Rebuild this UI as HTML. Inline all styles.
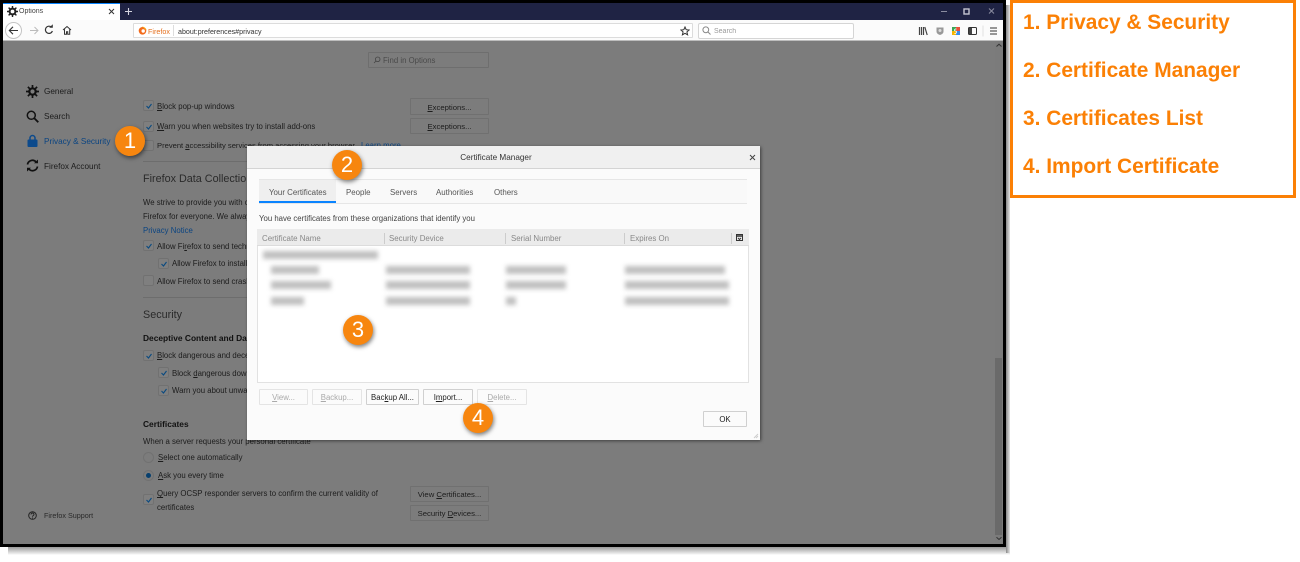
<!DOCTYPE html>
<html><head><meta charset="utf-8">
<style>
html,body{margin:0;padding:0;background:#fff}
body{width:1300px;height:562px;position:relative;overflow:hidden;font-family:"Liberation Sans",sans-serif}
.a{position:absolute}
.t{position:absolute;white-space:nowrap;font-size:7.8px;line-height:12px;color:#1c1c1c;filter:blur(.3px);margin-top:1px}
.s{font-size:8.200px}
.b{font-size:8.400px;font-weight:bold;color:#111}
.cb{position:absolute;width:9px;height:9px;border:1px solid #717171;border-radius:2px;background:#7f7f7f}
.cb svg{position:absolute;left:1px;top:1px}
.btn{position:absolute;box-sizing:border-box;border:1px solid #707070;background:#7c7c7c;font-size:7.700px;color:#1c1c1c;text-align:center;border-radius:1px;filter:blur(.3px)}
.mb{position:absolute;box-sizing:border-box;height:16px;border:1px solid #e4e4e4;background:#fbfbfb;font-size:7.800px;line-height:16px;text-align:center;color:#aaa;border-radius:1px;filter:blur(.3px)}
.num{position:absolute;width:30px;height:30px;border-radius:50%;background:#f7860f;color:#fff;font-size:22px;line-height:30px;text-align:center;box-shadow:1px 2px 4px rgba(0,0,0,.5)}
.bl{position:absolute;height:8px;background:#b4b4b4;filter:blur(2.500px);opacity:.85}
.hd{position:absolute;top:233px;font-size:7.900px;color:#888;white-space:nowrap;line-height:12px;filter:blur(.25px)}
.sep{position:absolute;top:233px;width:1px;height:11px;background:#ccc}
.tab{position:absolute;top:187px;font-size:7.900px;color:#555;line-height:12px;white-space:nowrap;filter:blur(.25px)}
.lb{position:absolute;left:1023px;font-size:20.900px;font-weight:bold;color:#fb8005;white-space:nowrap;line-height:24px}
</style></head><body>
<!-- shadow -->
<div class="a" style="left:8px;top:547px;width:1002px;height:8px;background:linear-gradient(#999,#eee 85%,#fff)"></div>
<div class="a" style="left:1006px;top:5px;width:4px;height:548px;background:linear-gradient(90deg,#888,#e6e6e6)"></div>
<!-- frame -->
<div class="a" style="left:0;top:0;width:1006px;height:547px;background:#000"></div>
<div class="a" style="left:3px;top:3px;width:1000px;height:17px;background:#1f2344"></div>
<div class="a" style="left:3px;top:3px;width:117px;height:17px;background:#fff;border-top:1px solid #0a84ff;box-sizing:border-box"></div>
<svg class="a" style="left:7px;top:6px" width="11" height="11" viewBox="0 0 11 11"><circle cx="5.500" cy="5.500" r="2.900" fill="none" stroke="#222" stroke-width="2"/><path d="M5.500 0v2M5.500 9v2M0 5.500h2M9 5.500h2M1.600 1.600l1.400 1.400M8 8l1.400 1.400M9.400 1.600L8 3M3 8L1.600 9.400" stroke="#222" stroke-width="1.400"/></svg>
<div class="t" style="left:19px;top:5px;font-size:7px;color:#444">Options</div>
<svg class="a" style="left:108px;top:8px" width="7" height="7" viewBox="0 0 7 7"><path d="M1 1l5 5M6 1L1 6" stroke="#333" stroke-width="1"/></svg>
<svg class="a" style="left:124px;top:7px" width="9" height="9" viewBox="0 0 9 9"><path d="M4.500 1v7M1 4.500h7" stroke="#d5d5e0" stroke-width="1.100"/></svg>
<svg class="a" style="left:939px;top:6px" width="60" height="12" viewBox="0 0 60 12"><path d="M2 5.500h6" stroke="#8a8ca0" stroke-width="1"/><rect x="25" y="3" width="5" height="5" fill="none" stroke="#c5c6d2" stroke-width="1.400"/><path d="M50 2.500l5 5M55 2.500l-5 5" stroke="#8a8ca0" stroke-width="1"/></svg>
<!-- toolbar -->
<div class="a" style="left:3px;top:20px;width:1000px;height:21px;background:#fbfbfb;border-bottom:1px solid #bdbdbd;box-sizing:border-box"></div>
<svg class="a" style="left:4px;top:21px" width="68" height="19" viewBox="0 0 68 19"><circle cx="9.500" cy="9.500" r="8" fill="#fff" stroke="#c4c4c4"/><path d="M14 9.500H5.500M9 5.800L5.300 9.500 9 13.200" fill="none" stroke="#333" stroke-width="1.100"/><path d="M34 9.500h-8M30.500 6l3.500 3.500-3.500 3.500" fill="none" stroke="#bbb" stroke-width="1"/><path d="M47.500 6.200A3.600 3.600 0 1 0 48.400 10" fill="none" stroke="#333" stroke-width="1.200"/><path d="M45.200 6.800h3.600V3.200z" fill="#333"/><path d="M59 9l4-3.500L67 9M60.500 8.300v5h2v-2.500h1.200v2.500h2V8.300" fill="none" stroke="#333" stroke-width="1"/></svg>
<div class="a" style="left:133px;top:23px;width:560px;height:15px;background:#fff;border:1px solid #dcdcdc;box-sizing:border-box;border-radius:1px"></div>
<svg class="a" style="left:138px;top:26px" width="9" height="9" viewBox="0 0 9 9"><circle cx="4.500" cy="4.800" r="3.800" fill="#f36a1a"/><circle cx="5.200" cy="5" r="1.700" fill="#fff"/><path d="M4 .5C6.500.8 8.500 2.500 8.600 4.500L7 3z" fill="#f9b11c"/></svg>
<div class="t" style="left:148px;top:25px;font-size:7.200px;color:#e4701e">Firefox</div>
<div class="a" style="left:173px;top:25px;width:1px;height:11px;background:#ddd"></div>
<div class="t" style="left:178px;top:25px;font-size:7.100px;color:#333">about:preferences#privacy</div>
<svg class="a" style="left:680px;top:26px" width="10" height="10" viewBox="0 0 10 10"><path d="M5 1l1.200 2.700 2.900.3-2.200 1.900.7 2.900L5 7.300 2.400 8.800l.7-2.900L.9 4l2.900-.3z" fill="none" stroke="#333" stroke-width="1"/></svg>
<div class="a" style="left:698px;top:23px;width:156px;height:16px;background:#fff;border:1px solid #d5d5d5;box-sizing:border-box;border-radius:2px"></div>
<svg class="a" style="left:702px;top:26px" width="9" height="9" viewBox="0 0 9 9"><circle cx="3.800" cy="3.800" r="2.900" fill="none" stroke="#888"/><path d="M6 6l2.500 2.500" stroke="#888"/></svg>
<div class="t" style="left:714px;top:25px;font-size:7px;color:#999">Search</div>
<svg class="a" style="left:918px;top:25px" width="80" height="12" viewBox="0 0 80 12"><path d="M1.500 2v8M3.500 2v8M5.500 2v8M6.800 2l2.400 8" stroke="#444" stroke-width="1.200" fill="none"/><path d="M18.500 2.500h7v4c0 2-2 3-3.500 3.500-1.500-.5-3.500-1.500-3.500-3.500z" fill="#999"/><circle cx="22" cy="5.500" r="1.500" fill="#ddd"/><rect x="34" y="2" width="4" height="4" fill="#3aa655"/><rect x="38" y="2" width="4" height="4" fill="#e8503a"/><rect x="34" y="6" width="4" height="4" fill="#f7b500"/><rect x="38" y="6" width="4" height="4" fill="#3a8de8"/><path d="M36.500 8.500c2 .5 3-2.500 1-2.500s-1-2.500 1-2" stroke="#fff" fill="none" stroke-width=".8"/><rect x="50.500" y="2.500" width="8" height="7" rx="1" fill="none" stroke="#333"/><rect x="51" y="3" width="3" height="6" fill="#444"/><path d="M65 .5v11" stroke="#e2e2e2"/><path d="M72 3h7M72 6h7M72 9h7" stroke="#333" stroke-width="1"/></svg>
<!-- content -->
<div class="a" style="left:3px;top:41px;width:1000px;height:503px;background:#7c7c7c"></div>
<div class="a" style="left:995px;top:41px;width:8px;height:503px;background:#7b7b7b"></div>
<div class="a" style="left:995px;top:358px;width:7px;height:177px;background:#6a6a6a"></div>
<svg class="a" style="left:995px;top:43px" width="8" height="5" viewBox="0 0 8 5"><path d="M1.500 3.500L4 1.200l2.500 2.300" fill="none" stroke="#333"/></svg>
<svg class="a" style="left:995px;top:536px" width="8" height="5" viewBox="0 0 8 5"><path d="M1.500 1.200L4 3.500l2.500-2.300" fill="none" stroke="#333"/></svg>
<div class="a" style="left:368px;top:52px;width:121px;height:16px;border:1px solid #6e6e6e;box-sizing:border-box;border-radius:1px"></div>
<svg class="a" style="left:373px;top:56px" width="8" height="8" viewBox="0 0 8 8"><circle cx="4.700" cy="3.300" r="2.300" fill="none" stroke="#444" stroke-width=".8"/><path d="M3 5L1 7" stroke="#444" stroke-width=".8"/></svg>
<div class="t" style="left:383px;top:54px;color:#4a4a4a">Find in Options</div>
<!-- sidebar -->
<svg class="a" style="left:26px;top:85px" width="13" height="13" viewBox="0 0 13 13"><circle cx="6.500" cy="6.500" r="3.200" fill="none" stroke="#111" stroke-width="2.200"/><path d="M6.500 0v2.500M6.500 10.500V13M0 6.500h2.500M10.500 6.500H13M1.900 1.900l1.800 1.800M9.300 9.300l1.800 1.800M11.100 1.900L9.300 3.700M3.700 9.300l-1.800 1.800" stroke="#111" stroke-width="1.700"/></svg>
<div class="t s" style="left:44px;top:85px">General</div>
<svg class="a" style="left:26px;top:110px" width="13" height="13" viewBox="0 0 13 13"><circle cx="5.300" cy="5.300" r="4" fill="none" stroke="#111" stroke-width="1.500"/><path d="M8.300 8.300l4 4" stroke="#111" stroke-width="1.800"/></svg>
<div class="t s" style="left:44px;top:110px">Search</div>
<svg class="a" style="left:27px;top:134px" width="11" height="13" viewBox="0 0 11 13"><path d="M3 6V4a2.500 2.500 0 0 1 5 0v2" fill="none" stroke="#0c4a8c" stroke-width="1.500"/><rect x=".5" y="5.500" width="10" height="7.500" rx="1" fill="#0c4a8c"/></svg>
<div class="t s" style="left:44px;top:135px;color:#0a4482">Privacy &amp; Security</div>
<svg class="a" style="left:26px;top:159px" width="13" height="13" viewBox="0 0 13 13"><path d="M1.500 5.500A5 5 0 0 1 10 2.800M11.500 7.500A5 5 0 0 1 3 10.200" fill="none" stroke="#111" stroke-width="1.700"/><path d="M8 4.200h4V.5zM5 8.800H1v3.700z" fill="#111"/></svg>
<div class="t s" style="left:44px;top:160px">Firefox Account</div>
<svg class="a" style="left:28px;top:511px" width="9" height="9" viewBox="0 0 9 9"><circle cx="4.500" cy="4.500" r="3.800" fill="none" stroke="#222"/><path d="M3 3.500c0-2 3-2 3 0 0 1-1.500 1-1.500 2.200M4.500 6.500v1" stroke="#222" fill="none" stroke-width=".9"/></svg>
<div class="t" style="left:44px;top:509px;font-size:7.200px;color:#2a2a2a">Firefox Support</div>
<!-- main -->
<div class="cb" style="left:143px;top:100px"><svg width="8" height="8" viewBox="0 0 8 8"><path d="M1.500 4l2 2 3-4" fill="none" stroke="#0a4a80" stroke-width="1.100"/></svg></div>
<div class="t" style="left:157px;top:100px"><u>B</u>lock pop-up windows</div>
<div class="btn" style="left:410px;top:98px;width:79px;height:17px;line-height:17px"><u>E</u>xceptions...</div>
<div class="cb" style="left:143px;top:121px"><svg width="8" height="8" viewBox="0 0 8 8"><path d="M1.500 4l2 2 3-4" fill="none" stroke="#0a4a80" stroke-width="1.100"/></svg></div>
<div class="t" style="left:157px;top:120px"><u>W</u>arn you when websites try to install add-ons</div>
<div class="btn" style="left:410px;top:118px;width:79px;height:16px;line-height:16px"><u>E</u>xceptions...</div>
<div class="cb" style="left:143px;top:140px"></div>
<div class="t" style="left:157px;top:139px;font-size:7.600px">Prevent <u>a</u>ccessibility services from accessing your browser</div>
<div class="t" style="left:361px;top:139px;color:#0a4482">Learn more</div>
<div class="a" style="left:143px;top:161px;width:352px;height:1px;background:#6d6d6d"></div>
<div class="t" style="left:143px;top:171px;font-size:10.800px;line-height:15px;color:#2a2a2a">Firefox Data Collection</div>
<div class="t" style="left:143px;top:196px">We strive to provide you with choices</div>
<div class="t" style="left:143px;top:210px">Firefox for everyone. We always ask</div>
<div class="t" style="left:143px;top:224px;color:#0a4482">Privacy Notice</div>
<div class="cb" style="left:143px;top:240px"><svg width="8" height="8" viewBox="0 0 8 8"><path d="M1.500 4l2 2 3-4" fill="none" stroke="#0a4a80" stroke-width="1.100"/></svg></div>
<div class="t" style="left:157px;top:240px">Allow Fi<u>r</u>efox to send technical data</div>
<div class="cb" style="left:158px;top:258px"><svg width="8" height="8" viewBox="0 0 8 8"><path d="M1.500 4l2 2 3-4" fill="none" stroke="#0a4a80" stroke-width="1.100"/></svg></div>
<div class="t" style="left:172px;top:257px">Allow Firefox to install studies</div>
<div class="cb" style="left:143px;top:275px"></div>
<div class="t" style="left:157px;top:275px">Allow Firefox to send crash reports</div>
<div class="a" style="left:143px;top:297px;width:352px;height:1px;background:#6d6d6d"></div>
<div class="t" style="left:143px;top:307px;font-size:10.800px;line-height:15px;color:#2a2a2a">Security</div>
<div class="t b" style="left:143px;top:331px">Deceptive Content and Dangerous</div>
<div class="cb" style="left:143px;top:350px"><svg width="8" height="8" viewBox="0 0 8 8"><path d="M1.500 4l2 2 3-4" fill="none" stroke="#0a4a80" stroke-width="1.100"/></svg></div>
<div class="t" style="left:157px;top:349px"><u>B</u>lock dangerous and deceptive</div>
<div class="cb" style="left:158px;top:367px"><svg width="8" height="8" viewBox="0 0 8 8"><path d="M1.500 4l2 2 3-4" fill="none" stroke="#0a4a80" stroke-width="1.100"/></svg></div>
<div class="t" style="left:172px;top:367px">Block <u>d</u>angerous downloads</div>
<div class="cb" style="left:158px;top:385px"><svg width="8" height="8" viewBox="0 0 8 8"><path d="M1.500 4l2 2 3-4" fill="none" stroke="#0a4a80" stroke-width="1.100"/></svg></div>
<div class="t" style="left:172px;top:384px">Warn you about unwanted</div>
<div class="t b" style="left:143px;top:417px">Certificates</div>
<div class="t" style="left:143px;top:435px">When a server requests your personal certificate</div>
<div class="a" style="left:143px;top:452px;width:9px;height:9px;border:1px solid #717171;border-radius:50%"></div>
<div class="t" style="left:158px;top:451px"><u>S</u>elect one automatically</div>
<div class="a" style="left:143px;top:470px;width:9px;height:9px;border:1px solid #717171;border-radius:50%"></div>
<div class="a" style="left:146px;top:473px;width:5px;height:5px;background:#063f6e;border-radius:50%"></div>
<div class="t" style="left:158px;top:469px"><u>A</u>sk you every time</div>
<div class="cb" style="left:143px;top:494px"><svg width="8" height="8" viewBox="0 0 8 8"><path d="M1.500 4l2 2 3-4" fill="none" stroke="#0a4a80" stroke-width="1.100"/></svg></div>
<div class="t" style="left:157px;top:487px"><u>Q</u>uery OCSP responder servers to confirm the current validity of</div>
<div class="t" style="left:157px;top:501px">certificates</div>
<div class="btn" style="left:410px;top:486px;width:79px;height:16px;line-height:16px">View <u>C</u>ertificates...</div>
<div class="btn" style="left:410px;top:505px;width:79px;height:16px;line-height:16px">Security <u>D</u>evices...</div>
<!-- dialog -->
<div class="a" style="left:247px;top:146px;width:513px;height:294px;background:#fbfbfb;box-shadow:1px 1px 3px rgba(0,0,0,.5)"></div>
<div class="a" style="left:247px;top:146px;width:513px;height:23px;background:#f0f0f0;border-bottom:1px solid #d4d4d4;box-sizing:border-box"></div>
<div class="t" style="left:247px;top:151px;width:498px;text-align:center;font-size:8.200px;color:#333">Certificate Manager</div>
<svg class="a" style="left:749px;top:154px" width="7" height="7" viewBox="0 0 7 7"><path d="M1 1l5 5M6 1L1 6" stroke="#444" stroke-width="1"/></svg>
<div class="a" style="left:259px;top:179px;width:488px;height:25px;background:#f9f9f9;border-top:1px solid #e6e6e6;border-bottom:1px solid #e6e6e6;box-sizing:border-box"></div>
<div class="a" style="left:259px;top:180px;width:77px;height:23px;background:#efefef;border-bottom:2px solid #0a84ff;box-sizing:border-box"></div>
<div class="tab" style="left:269px">Your Certificates</div>
<div class="tab" style="left:346px">People</div>
<div class="tab" style="left:390px">Servers</div>
<div class="tab" style="left:436px">Authorities</div>
<div class="tab" style="left:494px">Others</div>
<div class="t" style="left:259px;top:212px;color:#444">You have certificates from these organizations that identify you</div>
<div class="a" style="left:257px;top:229px;width:492px;height:154px;background:#fff;border:1px solid #e2e2e2;box-sizing:border-box"></div>
<div class="a" style="left:257px;top:229px;width:492px;height:17px;background:#ebebeb;border-bottom:1px solid #dcdcdc;box-sizing:border-box"></div>
<div class="hd" style="left:262px">Certificate Name</div>
<div class="sep" style="left:384px"></div><div class="hd" style="left:389px">Security Device</div>
<div class="sep" style="left:505px"></div><div class="hd" style="left:511px">Serial Number</div>
<div class="sep" style="left:624px"></div><div class="hd" style="left:630px">Expires On</div>
<div class="sep" style="left:731px"></div>
<svg class="a" style="left:736px;top:234px" width="7" height="7" viewBox="0 0 7 7"><rect x=".5" y=".5" width="6" height="6" fill="none" stroke="#333"/><path d="M.5 2h6" stroke="#333" stroke-width="1.500"/><path d="M2 4l1.500 1.500L5 4" fill="none" stroke="#333"/></svg>
<div class="bl" style="left:263px;top:251px;width:115px"></div>
<div class="bl" style="left:271px;top:266px;width:48px"></div><div class="bl" style="left:386px;top:266px;width:84px"></div><div class="bl" style="left:506px;top:266px;width:60px"></div><div class="bl" style="left:625px;top:266px;width:100px"></div>
<div class="bl" style="left:271px;top:281px;width:60px"></div><div class="bl" style="left:386px;top:281px;width:84px"></div><div class="bl" style="left:506px;top:281px;width:60px"></div><div class="bl" style="left:625px;top:281px;width:104px"></div>
<div class="bl" style="left:271px;top:297px;width:33px"></div><div class="bl" style="left:386px;top:297px;width:84px"></div><div class="bl" style="left:506px;top:297px;width:10px"></div><div class="bl" style="left:625px;top:297px;width:104px"></div>
<div class="mb" style="left:259px;top:389px;width:49px"><u>V</u>iew...</div>
<div class="mb" style="left:312px;top:389px;width:50px"><u>B</u>ackup...</div>
<div class="mb" style="left:366px;top:389px;width:53px;color:#222;border-color:#d0d0d0">Bac<u>k</u>up All...</div>
<div class="mb" style="left:423px;top:389px;width:50px;color:#222;border-color:#d0d0d0">I<u>m</u>port...</div>
<div class="mb" style="left:477px;top:389px;width:50px"><u>D</u>elete...</div>
<div class="mb" style="left:703px;top:411px;width:44px;color:#222;border-color:#d0d0d0">OK</div>
<svg class="a" style="left:752px;top:432px" width="7" height="7" viewBox="0 0 7 7"><path d="M6 2L2 6M6 4L4 6" stroke="#ccc"/></svg>
<!-- callouts -->
<div class="num" style="left:115px;top:126px">1</div>
<div class="num" style="left:332px;top:150px">2</div>
<div class="num" style="left:343px;top:315px">3</div>
<div class="num" style="left:463px;top:403px">4</div>
<!-- legend -->
<div class="a" style="left:1010px;top:0;width:286px;height:198px;border:3px solid #fb8005;box-sizing:border-box;background:#fff"></div>
<div class="lb" style="top:11px">1. Privacy &amp; Security</div>
<div class="lb" style="top:59px">2. Certificate Manager</div>
<div class="lb" style="top:107px">3. Certificates List</div>
<div class="lb" style="top:155px">4. Import Certificate</div>
</body></html>
